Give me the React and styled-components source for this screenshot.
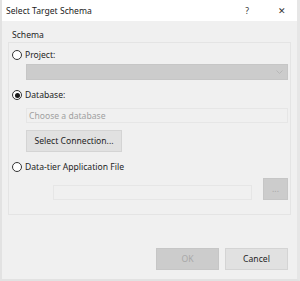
import React from "react";
import styled, { createGlobalStyle } from "styled-components";

const Global = createGlobalStyle`
  *, *::before, *::after { box-sizing: border-box; }
  html, body { margin: 0; padding: 0; background: #f0f0f0; }
  body { font-family: "Noto Sans", "Open Sans", sans-serif; font-size: 8.6px; color: #1e1e1e; }
`;

const Window = styled.div`
  width: 300px;
  height: 281px;
  display: flex;
  flex-direction: column;
  background: #f0f0f0;
  border-left: 2px solid #e2e2e2;
  border-right: 3px solid #e6e6e6;
  border-bottom: 2px solid #e2e2e2;
  overflow: hidden;
`;

const TitleBar = styled.div`
  height: 21px;
  flex: none;
  display: flex;
  align-items: center;
  background: #ffffff;
  margin: 0 -3px 0 -2px;
  padding-left: 6px;
`;

const Title = styled.span`
  flex: 1;
  font-size: 8.6px;
  color: #222;
`;

const TitleButton = styled.span`
  width: 16px;
  text-align: center;
  font-size: ${(p) => p.$fs || 8.6}px;
  color: #333;
  margin-left: ${(p) => p.$ml || 0}px;
  margin-right: ${(p) => p.$mr || 0}px;
`;

const Body = styled.div`
  flex: 1;
  display: flex;
  flex-direction: column;
  padding: 8px 6px 0 6px;
`;

const GroupLabel = styled.div`
  padding-left: 4px;
  height: 13px;
  line-height: 13px;
  font-size: 8.6px;
`;

const GroupBox = styled.div`
  border: 1px solid #e4e4e4;
  height: 173px;
  flex: none;
  padding: 5px 2px 0 3px;
  display: flex;
  flex-direction: column;
`;

const RadioRow = styled.label`
  display: flex;
  align-items: center;
  gap: 3px;
  height: 14px;
  flex: none;
  margin-top: ${(p) => p.$mt || 0}px;
  font-size: 8.6px;
  white-space: nowrap;
`;

const RadioCircle = styled.span`
  width: 10px;
  height: 10px;
  border: 1px solid #333;
  border-radius: 50%;
  background: #fff;
  display: flex;
  align-items: center;
  justify-content: center;
  flex: none;
  &::after {
    content: "";
    width: 5px;
    height: 5px;
    border-radius: 50%;
    background: #1a1a1a;
    display: ${(p) => (p.$checked ? "block" : "none")};
  }
`;

const Indented = styled.div`
  padding-left: ${(p) => p.$pl || 14}px;
  margin-top: ${(p) => p.$mt || 0}px;
  display: flex;
  flex: none;
  gap: 11px;
  align-items: flex-end;
`;

const Combo = styled.div`
  flex: 1;
  height: 16px;
  background: #cccccc;
  border: 1px solid #c6c6c6;
  display: flex;
  align-items: center;
  justify-content: flex-end;
  padding-right: 4px;
`;

const TextBox = styled.div`
  flex: 1;
  height: 15px;
  border: 1px solid #e6e6e6;
  background: #f0f0f0;
  color: #a0a0a0;
  padding-left: 2px;
  display: flex;
  align-items: center;
  font-size: 8.6px;
  white-space: nowrap;
`;

const Button = styled.div`
  width: ${(p) => p.$w}px;
  height: ${(p) => p.$h}px;
  flex: none;
  display: flex;
  align-items: center;
  justify-content: center;
  white-space: nowrap;
  background: ${(p) => (p.$disabled ? "#cccccc" : "#e1e1e1")};
  border: 1px solid ${(p) => (p.$disabled ? "#c6c6c6" : "#d4d4d4")};
  color: ${(p) => (p.$disabled ? "#a8a8a8" : "#1e1e1e")};
  font-size: 8.6px;
`;

const Footer = styled.div`
  flex: 1;
  display: flex;
  justify-content: flex-end;
  align-items: flex-start;
  gap: 6px;
  padding-top: 33px;
  padding-right: 3px;
`;

function Chevron() {
  return (
    <svg width="7" height="4" viewBox="0 0 7 4">
      <path d="M0.5 0.5 L3.5 3.5 L6.5 0.5" fill="none" stroke="#b8b8b8" strokeWidth="1" />
    </svg>
  );
}

export default function App() {
  return (
    <>
      <Global />
      <Window>
        <TitleBar>
          <Title>Select Target Schema</Title>
          <TitleButton>?</TitleButton>
          <TitleButton $ml={19} $mr={10} $fs={9}>✕</TitleButton>
        </TitleBar>
        <Body>
          <GroupLabel>Schema</GroupLabel>
          <GroupBox>
            <RadioRow>
              <RadioCircle />
              Project:
            </RadioRow>
            <Indented $mt={2}>
              <Combo>
                <Chevron />
              </Combo>
            </Indented>
            <RadioRow $mt={8}>
              <RadioCircle $checked />
              Database:
            </RadioRow>
            <Indented $mt={6}>
              <TextBox>Choose a database</TextBox>
            </Indented>
            <Indented $mt={7}>
              <Button $w={96} $h={22}>Select Connection...</Button>
            </Indented>
            <RadioRow $mt={8}>
              <RadioCircle />
              Data-tier Application File
            </RadioRow>
            <Indented $pl={41} $mt={4}>
              <TextBox />
              <Button $w={25} $h={22} $disabled>...</Button>
            </Indented>
          </GroupBox>
          <Footer>
            <Button $w={63} $h={22} $disabled>OK</Button>
            <Button $w={63} $h={22}>Cancel</Button>
          </Footer>
        </Body>
      </Window>
    </>
  );
}
